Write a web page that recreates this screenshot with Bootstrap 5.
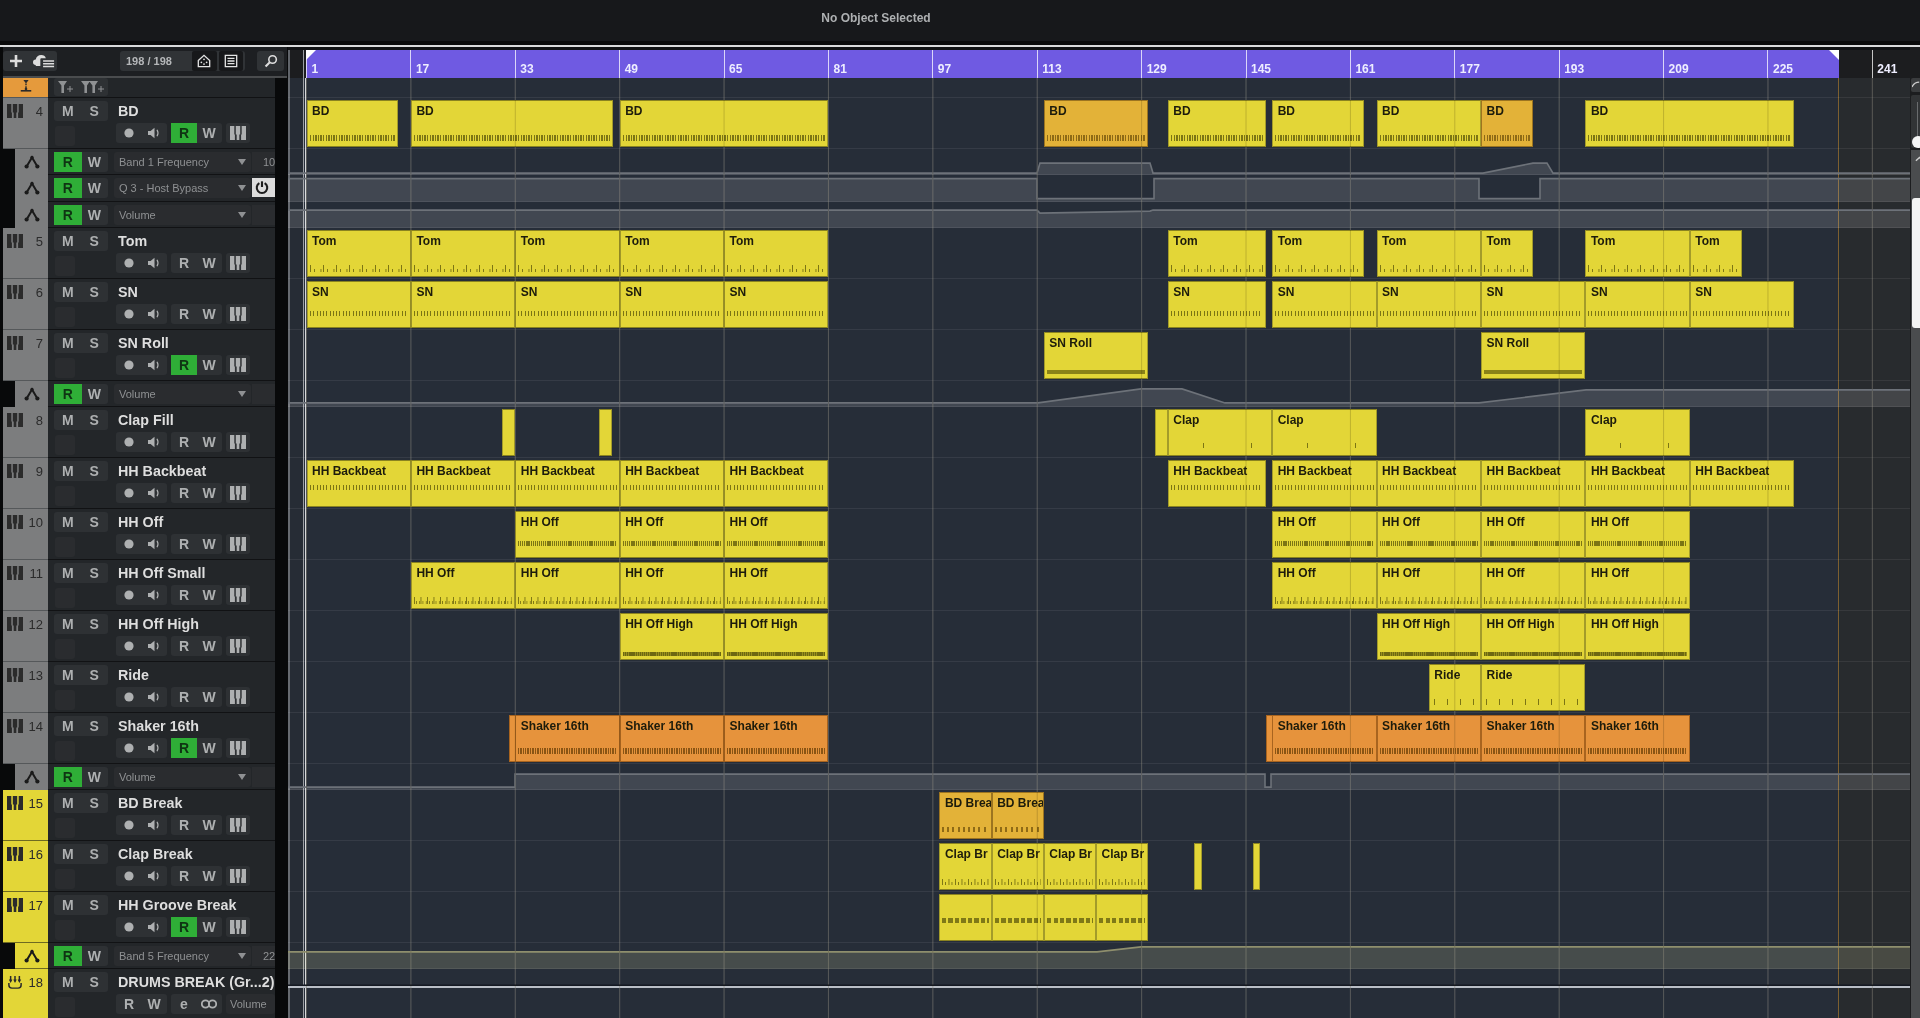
<!DOCTYPE html>
<html lang="en">
<head>
<meta charset="utf-8">
<title>Arrangement</title>
<link href="https://cdn.jsdelivr.net/npm/bootstrap@5.3.0/dist/css/bootstrap.min.css" rel="stylesheet">
<style>
html,body{height:100%;overflow:hidden;background:#111214}
body{font-family:"Liberation Sans",Arial,sans-serif;font-size:12px}
.appw{width:1920px;height:1018px;filter:blur(.45px)}
.topb{height:41px;background:#17181b;color:#aeb0b2;font-weight:700;font-size:12px;line-height:36px}
.topt{width:1752px}
.sepb{height:6px;background:#0a0a0b;border-bottom:2px solid #d9dadb;}
.lcol{width:288px;background:#08090a;padding-left:3px}
.tool{height:31px;width:284px;background:#1d1f22;padding:4px 0 0 0;border-bottom:2px solid #4a4c4e;gap:0}
.tg{height:20px;background:#303336;border-radius:3px;color:#ddd;display:flex;align-items:center}
.tg1{width:54px;justify-content:space-between;padding:0 2px 0 6px}
.tg2{width:125px;margin-left:63px;padding-left:6px;color:#b5b7b9;font-weight:700;font-size:11px}
.tcnt{width:70px}
.ti{width:26px;height:20px;background:#17181a;margin-right:2px;border-radius:2px;display:flex;align-items:center;justify-content:center;color:#e4e4e4}
.tg3{width:27px;margin-left:12px;justify-content:center}
.trows{width:272px}
.trk{height:50.9px;background:#232629;box-shadow:inset 0 -1px #111214}
.atr{height:26.5px;background:#232629;box-shadow:inset 0 -1px #111214}
.ttop{height:20px;background:#232629;box-shadow:inset 0 -1px #111214}
.tb{width:45px;flex:none;padding:6px 5px 0 4px;display:flex;justify-content:space-between;align-items:flex-start;color:#2b2b2b;font-size:13px;line-height:13px;font-weight:400;box-shadow:inset 0 -1px #55585a}
.tb span{margin-top:1px}
.tb-g{background:#7c7d7e}
.tb-y{background:#e3d637;box-shadow:inset 0 -1px #6e6a22}
.tb-o{background:#e59a3c;height:20px;justify-content:center;padding:1px 0 0}
.ab{width:12px;flex:none;background:#08090a}
.tb2{width:33px;flex:none;display:flex;justify-content:center;padding-top:6px;color:#1a1a1a}
.ca{width:54px;margin-left:6px;flex:none}
.cz{margin-left:8px;flex:1;min-width:0}
.gp{height:20px;width:54px;margin-top:3px;background:#2e3134;border-radius:3px;display:flex}
.gp2{width:51px;margin-top:0}
.gp3{width:24px;margin-top:0}
.gp .btn{flex:1;padding:0;border:0;border-radius:3px;font-size:14px;line-height:20px;font-weight:700;color:#aeb0b1;background:transparent;display:flex;align-items:center;justify-content:center}
.gp .on{background:#2fae37;color:#0f3413;border-radius:0}
.sq{width:20px;height:20px;margin:5px 0 0 1px;background:#2a2c2f;border-radius:3px}
.tname{height:25px;padding:4px 0 0 2px;font-size:14.3px;line-height:18px;font-weight:700;color:#dedede;white-space:nowrap}
.sel{width:137px;height:20px;margin:3px 0 0 6px;background:#2a2c2f;border-radius:3px;color:#8f9193;font-size:11px;line-height:20px;padding:0 5px;display:flex;justify-content:space-between;align-items:center;flex:none;font-weight:400;white-space:nowrap}
.val{width:23px;height:20px;margin:3px 0 0 1px;background:#2a2c2f;color:#8f9193;font-size:11px;line-height:20px;padding-left:11px;overflow:hidden;flex:none}
.pw{background:#dcdcdc;padding:2px 0 0 3px;height:19px;color:#1d1d1d}
.vbox{width:49px;height:20px;background:#2a2c2f;border-radius:3px;color:#8f9193;font-size:11px;line-height:20px;padding-left:4px;overflow:hidden}
.arr{width:1622px}
.rul{height:28px;margin-top:3px;background:#1c1d1f;margin-right:3px}
.rgut{width:18px;flex:none;background:linear-gradient(90deg,#60646a 0 2px,#1c1d1f 2px 15px,#9a9da2 15px 16px,#1c1d1f 16px)}
.rmain{background:linear-gradient(90deg,#6f5ae2 0 1533px,#1c1d1f 1533px);position:relative}
.rcell{width:104.4px;flex:none;border-left:1.5px solid rgba(255,255,255,.75);padding:12px 0 0 4.5px;color:#eef;font-weight:700;font-size:12px;line-height:14px}
.lk{position:absolute;top:0;width:10px;height:10px;background:#fff}
.lk1{left:0;clip-path:polygon(0 0,100% 0,0 100%)}
.lk2{left:1523px;clip-path:polygon(0 0,100% 0,100% 100%)}
.lanes{position:relative;height:940px;overflow:hidden;background:
 linear-gradient(90deg,rgba(255,255,255,.27) 1px,transparent 1px) 18px 0/104.4px 100% repeat-x,
 linear-gradient(90deg,#666a70 0 2px,#262c35 2px 15px,#9a9da2 15px 16px,#262d38 16px 17px,#d5d7da 17px 18px,#262d38 18px 1550px,#7e5f30 1550px 1551px,#1f2c33 1551px 1552px,#282b2e 1552px)}
.lanes::after{content:"";position:absolute;inset:0;pointer-events:none;background:linear-gradient(90deg,rgba(40,30,0,.2) 1px,transparent 1px) 18px 0/104.4px 100% repeat-x}
.lane{position:relative;box-shadow:inset 0 -1px rgba(255,255,255,.07)}
.lr{height:50.9px}.la{height:26.5px}.lt{height:20px}
.la svg{position:absolute;inset:0;width:100%;height:100%;display:block}
.lf{fill:rgba(255,255,255,.125)}
.ll{fill:none;stroke:#6d7279;stroke-width:1.6}
.lfy{fill:rgba(255,255,190,.15)}
.lly{fill:none;stroke:#8f8f6d;stroke-width:1.6}
.gline{height:2px;margin-top:17px;background:#b9bec6;box-shadow:0 -1.5px #141922}
.cp{--t:#7c7514;position:absolute;top:2px;bottom:2px;left:calc(var(--b)*6.525px + 18.5px);width:calc(var(--w)*6.525px);background:#e3d637;border:1px solid #8a8320;border-left-color:#a39b2a;border-right-color:#a39b2a;color:#1d1c0c;font-weight:700;font-size:12px;line-height:14px;padding:3px 0 0 4.5px;overflow:hidden;white-space:nowrap}
.or{background:#e3b238;border-color:#9c7420;--t:#8e6a16}
.sh{background:#e6933c;border-color:#a8641f;--t:#8a5514}
.cp::after{content:"";position:absolute;left:2px;right:2px;bottom:5px;height:6px}
.nt::after{display:none}
.l-bd .cp::after{background:repeating-linear-gradient(90deg,var(--t) 0 1.4px,transparent 1.4px 2.6px)}
.l-tom .cp::after{bottom:4px;height:7px;background:linear-gradient(90deg,var(--t) 1px,transparent 1px) 0 100%/13px 7px repeat-x,linear-gradient(90deg,var(--t) 1px,transparent 1px) 4px 100%/6.5px 3px repeat-x}
.l-sn .cp::after{bottom:11px;height:5px;background:repeating-linear-gradient(90deg,var(--t) 0 1px,transparent 1px 3.27px)}
.l-roll .cp::after{bottom:4px;height:4px;background:#8a8218}
.l-bb .cp::after{bottom:16px;height:5px;background:repeating-linear-gradient(90deg,var(--t) 0 1px,transparent 1px 3.27px)}
.l-off .cp::after{bottom:11px;height:5px;background:repeating-linear-gradient(90deg,var(--t) 0 1.2px,transparent 1.2px 2.1px)}
.l-sm .cp::after{bottom:4px;height:7px;background:linear-gradient(90deg,var(--t) 1px,transparent 1px) 0 100%/6.5px 7px repeat-x,linear-gradient(90deg,var(--t) 1px,transparent 1px) 2px 100%/3.27px 3px repeat-x}
.l-hi .cp::after{bottom:3px;height:4px;background:repeating-linear-gradient(90deg,#6d6712 0 1.3px,#98901c 1.3px 2.1px)}
.l-rd .cp::after{bottom:5px;height:6px;background:linear-gradient(90deg,var(--t) 1px,transparent 1px) 2px 100%/13px 6px repeat-x}
.l-sh .cp::after{bottom:7px;height:6px;background:repeating-linear-gradient(90deg,var(--t) 0 1px,transparent 1px 1.7px)}
.l-cl .cp::after{bottom:7px;height:5px;background:linear-gradient(90deg,var(--t) 1.5px,transparent 1.5px) 32px 100%/48px 5px repeat-x}
.l-bk .cp::after{bottom:6px;height:5px;background:repeating-linear-gradient(90deg,var(--t) 0 2px,transparent 2px 5.2px)}
.l-cb .cp::after{bottom:4px;height:6px;background:linear-gradient(90deg,var(--t) 1px,transparent 1px) 0 100%/6.5px 6px repeat-x,linear-gradient(90deg,var(--t) 1px,transparent 1px) 3px 100%/6.5px 3px repeat-x}
.l-gr .cp::after{bottom:17px;height:5px;background:repeating-linear-gradient(90deg,#7f7917 0 4.4px,transparent 4.4px 6.5px)}
.rstrip{width:10px;background:#1c1d1f;padding-top:4px}
.rb{height:24px;background:#3a3c3e;border-radius:2px 0 0 2px;margin-left:1px;margin-bottom:3px;color:#cfcfcf;display:flex;align-items:center;padding-left:1px}
.rb2{height:14px}
.rb3{height:53px;position:relative;background:#323436}
.rb3::after{content:"";position:absolute;left:6px;top:7px;width:1px;height:36px;background:#6a6c6e}
.knob{position:absolute;left:1px;top:41px;width:12px;height:12px;border-radius:50%;background:#f5f5f5;z-index:1}
.rp{height:868px;background:#4a4c4e;margin-left:1px;margin-top:-1px;padding-top:6px;color:#cfcfcf}
.thumb{height:130px;margin-top:36px;margin-left:1px;background:#f4f4f4;border-radius:3px 0 0 3px}
.ik{width:16px;height:14px;display:block}
.i14{width:14px;height:14px;display:block}
.i12{width:12px;height:12px;display:block}
.i8{width:8px;height:6px;display:block}
</style>
</head>
<body>
<svg width="0" height="0" class="position-absolute">
<symbol id="k" viewBox="0 0 16 14"><path fill="currentColor" d="M0 0h4.3v8.5h.6V14H0zM5.8 0h4.4v8.5H9.3V14H6.7V8.5h-.9zM11.7 0H16v14h-4.9V8.5h.6z"/></symbol>
<symbol id="a" viewBox="0 0 16 14"><path d="M2.6 11.5 8 2.5l5.4 9" fill="none" stroke="currentColor" stroke-width="2"/><circle cx="2.6" cy="11.5" r="2.1" fill="currentColor"/><circle cx="13.4" cy="11.5" r="2.1" fill="currentColor"/><circle cx="8" cy="2.5" r="1.7" fill="currentColor"/></symbol>
<symbol id="d" viewBox="0 0 14 14"><circle cx="7" cy="7" r="4.6" fill="currentColor"/></symbol>
<symbol id="s" viewBox="0 0 14 14"><path fill="currentColor" d="M1 5h2.6L7.5 1.8v10.4L3.6 9H1z"/><path d="M10 3.8q2 3.2 0 6.4" fill="none" stroke="currentColor" stroke-width="1.2"/></symbol>
<symbol id="g" viewBox="0 0 16 16"><path d="M3 1v6M8 1v6M13 1v6M1 9v2.5Q1 15 4.5 15h7q3.5 0 3.5-3.5V9" fill="none" stroke="currentColor" stroke-width="1.7"/><path fill="currentColor" d="M1 5h4L3 9zM6 5h4L8 9zM11 5h4l-2 4z"/></symbol>
<symbol id="h" viewBox="0 0 16 16"><path d="M1.5 7.5 8 1.5l6.5 6V14.5h-13z" fill="none" stroke="currentColor" stroke-width="1.5"/><circle cx="8" cy="6" r="1" fill="currentColor"/><circle cx="5" cy="9.5" r="1" fill="currentColor"/><circle cx="11" cy="9.5" r="1" fill="currentColor"/><circle cx="8" cy="11.5" r="1" fill="currentColor"/></symbol>
<symbol id="l" viewBox="0 0 16 16"><path d="M1.5 1.5h13v13h-13zM4 5h8M4 8h8M4 11h8" fill="none" stroke="currentColor" stroke-width="1.5"/></symbol>
<symbol id="m" viewBox="0 0 16 16"><circle cx="9.8" cy="6.2" r="4.3" fill="none" stroke="currentColor" stroke-width="1.8"/><path d="M6.6 9.4 1.8 14.2" stroke="currentColor" stroke-width="2.4"/></symbol>
<symbol id="c" viewBox="0 0 24 16"><path fill="currentColor" d="M3 13Q0 13 0 10t3-3q1-5 6-5 4 0 5 3.5H9q-1 0-1 1V14H3z"/><path d="M11 8.5h12M11 11.5h12M11 14.5h12" stroke="currentColor" stroke-width="1.6"/></symbol>
<symbol id="p" viewBox="0 0 16 16"><path d="M5 3.6a6 6 0 1 0 6 0" fill="none" stroke="currentColor" stroke-width="2.4"/><path d="M8 1.5v6.5" stroke="currentColor" stroke-width="2.4"/></symbol>
<symbol id="f" viewBox="0 0 16 14"><path fill="currentColor" d="M0 1h9L6 5.5V13H3.4V5.5z"/><path d="M9 9h6M12 6v6" stroke="currentColor" stroke-width="1"/></symbol>
<symbol id="f2" viewBox="0 0 24 14"><path fill="currentColor" d="M0 1h9L6 5.5V13H3.4V5.5zM8 1h9l-3 4.5V13h-2.6V5.5z"/><path d="M17 9h6M20 6v6" stroke="currentColor" stroke-width="1"/></symbol>
<symbol id="o" viewBox="0 0 16 16"><path fill="currentColor" d="M5 1h6L8 5z"/><path d="M8 5v6" stroke="currentColor" stroke-width="1.6" stroke-dasharray="2 1.4"/><path d="M2 13.5h12" stroke="currentColor" stroke-width="1.8"/><circle cx="8" cy="11.5" r="1.5" fill="currentColor"/></symbol>
<symbol id="r" viewBox="0 0 16 14"><circle cx="4.5" cy="7" r="3.7" fill="none" stroke="currentColor" stroke-width="1.8"/><circle cx="11.5" cy="7" r="3.7" fill="none" stroke="currentColor" stroke-width="1.8"/></symbol>
<symbol id="t" viewBox="0 0 8 6"><path fill="currentColor" d="M0 0h8L4 6z"/></symbol>
<symbol id="cu" viewBox="0 0 10 10"><path d="M0 8Q3 2 9 2" fill="none" stroke="currentColor" stroke-width="1.6"/></symbol>
<symbol id="ch" viewBox="0 0 10 6"><path d="M1 5l4-3.6L9 5" fill="none" stroke="currentColor" stroke-width="1.6"/></symbol>
</svg>
<div class="appw d-flex flex-column">
<div class="topb"><div class="topt text-center">No Object Selected</div></div>
<div class="sepb"></div>
<div class="d-flex flex-grow-1 overflow-hidden">
<div class="lcol flex-none">
<div class="tool d-flex">
<div class="tg tg1"><svg class="i14"><path d="M7 1v12M1 7h12" stroke="currentColor" stroke-width="2.6"/></svg><svg width="22" height="15"><use href="#c"/></svg></div>
<div class="tg tg2"><span class="tcnt">198 / 198</span><span class="ti"><svg class="i14"><use href="#h"/></svg></span><span class="ti"><svg class="i14"><use href="#l"/></svg></span></div>
<div class="tg tg3"><svg class="i14"><use href="#m"/></svg></div>
</div>
<div class="trows">
<div class="ttop d-flex"><div class="tb tb-o"><svg class="i14"><use href="#o"/></svg></div><div class="ca"><div class="gp m-0 d-flex align-items-center justify-content-around" style="height:18px;color:#8f9193"><svg width="16" height="14"><use href="#f"/></svg><svg width="24" height="14"><use href="#f2"/></svg></div></div></div>

<div class="trk d-flex"><div class="tb tb-g"><svg class="ik"><use href="#k"/></svg><span>4</span></div><div class="ca"><div class="btn-group gp"><button class="btn">M</button><button class="btn">S</button></div><div class="sq"></div></div><div class="cz"><div class="tname">BD</div><div class="d-flex gap-1"><div class="btn-group gp gp2"><button class="btn"><svg class="i14"><use href="#d"/></svg></button><button class="btn"><svg class="i14"><use href="#s"/></svg></button></div><div class="btn-group gp gp2"><button class="btn on">R</button><button class="btn">W</button></div><div class="gp gp3"><button class="btn"><svg class="ik"><use href="#k"/></svg></button></div></div></div></div>

<div class="atr d-flex"><div class="ab"></div><div class="tb2 tb-g"><svg class="ik"><use href="#a"/></svg></div><div class="ca"><div class="btn-group gp"><button class="btn on">R</button><button class="btn">W</button></div></div><div class="sel">Band 1 Frequency<svg class="i8"><use href="#t"/></svg></div><div class="val">10</div></div>
<div class="atr d-flex"><div class="ab"></div><div class="tb2 tb-g"><svg class="ik"><use href="#a"/></svg></div><div class="ca"><div class="btn-group gp"><button class="btn on">R</button><button class="btn">W</button></div></div><div class="sel">Q 3 - Host Bypass<svg class="i8"><use href="#t"/></svg></div><div class="val pw"><svg class="i14"><use href="#p"/></svg></div></div>
<div class="atr d-flex"><div class="ab"></div><div class="tb2 tb-g"><svg class="ik"><use href="#a"/></svg></div><div class="ca"><div class="btn-group gp"><button class="btn on">R</button><button class="btn">W</button></div></div><div class="sel">Volume<svg class="i8"><use href="#t"/></svg></div><div class="val"></div></div>

<div class="trk d-flex"><div class="tb tb-g"><svg class="ik"><use href="#k"/></svg><span>5</span></div><div class="ca"><div class="btn-group gp"><button class="btn">M</button><button class="btn">S</button></div><div class="sq"></div></div><div class="cz"><div class="tname">Tom</div><div class="d-flex gap-1"><div class="btn-group gp gp2"><button class="btn"><svg class="i14"><use href="#d"/></svg></button><button class="btn"><svg class="i14"><use href="#s"/></svg></button></div><div class="btn-group gp gp2"><button class="btn">R</button><button class="btn">W</button></div><div class="gp gp3"><button class="btn"><svg class="ik"><use href="#k"/></svg></button></div></div></div></div>

<div class="trk d-flex"><div class="tb tb-g"><svg class="ik"><use href="#k"/></svg><span>6</span></div><div class="ca"><div class="btn-group gp"><button class="btn">M</button><button class="btn">S</button></div><div class="sq"></div></div><div class="cz"><div class="tname">SN</div><div class="d-flex gap-1"><div class="btn-group gp gp2"><button class="btn"><svg class="i14"><use href="#d"/></svg></button><button class="btn"><svg class="i14"><use href="#s"/></svg></button></div><div class="btn-group gp gp2"><button class="btn">R</button><button class="btn">W</button></div><div class="gp gp3"><button class="btn"><svg class="ik"><use href="#k"/></svg></button></div></div></div></div>

<div class="trk d-flex"><div class="tb tb-g"><svg class="ik"><use href="#k"/></svg><span>7</span></div><div class="ca"><div class="btn-group gp"><button class="btn">M</button><button class="btn">S</button></div><div class="sq"></div></div><div class="cz"><div class="tname">SN Roll</div><div class="d-flex gap-1"><div class="btn-group gp gp2"><button class="btn"><svg class="i14"><use href="#d"/></svg></button><button class="btn"><svg class="i14"><use href="#s"/></svg></button></div><div class="btn-group gp gp2"><button class="btn on">R</button><button class="btn">W</button></div><div class="gp gp3"><button class="btn"><svg class="ik"><use href="#k"/></svg></button></div></div></div></div>

<div class="atr d-flex"><div class="ab"></div><div class="tb2 tb-g"><svg class="ik"><use href="#a"/></svg></div><div class="ca"><div class="btn-group gp"><button class="btn on">R</button><button class="btn">W</button></div></div><div class="sel">Volume<svg class="i8"><use href="#t"/></svg></div><div class="val"></div></div>

<div class="trk d-flex"><div class="tb tb-g"><svg class="ik"><use href="#k"/></svg><span>8</span></div><div class="ca"><div class="btn-group gp"><button class="btn">M</button><button class="btn">S</button></div><div class="sq"></div></div><div class="cz"><div class="tname">Clap Fill</div><div class="d-flex gap-1"><div class="btn-group gp gp2"><button class="btn"><svg class="i14"><use href="#d"/></svg></button><button class="btn"><svg class="i14"><use href="#s"/></svg></button></div><div class="btn-group gp gp2"><button class="btn">R</button><button class="btn">W</button></div><div class="gp gp3"><button class="btn"><svg class="ik"><use href="#k"/></svg></button></div></div></div></div>

<div class="trk d-flex"><div class="tb tb-g"><svg class="ik"><use href="#k"/></svg><span>9</span></div><div class="ca"><div class="btn-group gp"><button class="btn">M</button><button class="btn">S</button></div><div class="sq"></div></div><div class="cz"><div class="tname">HH Backbeat</div><div class="d-flex gap-1"><div class="btn-group gp gp2"><button class="btn"><svg class="i14"><use href="#d"/></svg></button><button class="btn"><svg class="i14"><use href="#s"/></svg></button></div><div class="btn-group gp gp2"><button class="btn">R</button><button class="btn">W</button></div><div class="gp gp3"><button class="btn"><svg class="ik"><use href="#k"/></svg></button></div></div></div></div>

<div class="trk d-flex"><div class="tb tb-g"><svg class="ik"><use href="#k"/></svg><span>10</span></div><div class="ca"><div class="btn-group gp"><button class="btn">M</button><button class="btn">S</button></div><div class="sq"></div></div><div class="cz"><div class="tname">HH Off</div><div class="d-flex gap-1"><div class="btn-group gp gp2"><button class="btn"><svg class="i14"><use href="#d"/></svg></button><button class="btn"><svg class="i14"><use href="#s"/></svg></button></div><div class="btn-group gp gp2"><button class="btn">R</button><button class="btn">W</button></div><div class="gp gp3"><button class="btn"><svg class="ik"><use href="#k"/></svg></button></div></div></div></div>

<div class="trk d-flex"><div class="tb tb-g"><svg class="ik"><use href="#k"/></svg><span>11</span></div><div class="ca"><div class="btn-group gp"><button class="btn">M</button><button class="btn">S</button></div><div class="sq"></div></div><div class="cz"><div class="tname">HH Off Small</div><div class="d-flex gap-1"><div class="btn-group gp gp2"><button class="btn"><svg class="i14"><use href="#d"/></svg></button><button class="btn"><svg class="i14"><use href="#s"/></svg></button></div><div class="btn-group gp gp2"><button class="btn">R</button><button class="btn">W</button></div><div class="gp gp3"><button class="btn"><svg class="ik"><use href="#k"/></svg></button></div></div></div></div>

<div class="trk d-flex"><div class="tb tb-g"><svg class="ik"><use href="#k"/></svg><span>12</span></div><div class="ca"><div class="btn-group gp"><button class="btn">M</button><button class="btn">S</button></div><div class="sq"></div></div><div class="cz"><div class="tname">HH Off High</div><div class="d-flex gap-1"><div class="btn-group gp gp2"><button class="btn"><svg class="i14"><use href="#d"/></svg></button><button class="btn"><svg class="i14"><use href="#s"/></svg></button></div><div class="btn-group gp gp2"><button class="btn">R</button><button class="btn">W</button></div><div class="gp gp3"><button class="btn"><svg class="ik"><use href="#k"/></svg></button></div></div></div></div>

<div class="trk d-flex"><div class="tb tb-g"><svg class="ik"><use href="#k"/></svg><span>13</span></div><div class="ca"><div class="btn-group gp"><button class="btn">M</button><button class="btn">S</button></div><div class="sq"></div></div><div class="cz"><div class="tname">Ride</div><div class="d-flex gap-1"><div class="btn-group gp gp2"><button class="btn"><svg class="i14"><use href="#d"/></svg></button><button class="btn"><svg class="i14"><use href="#s"/></svg></button></div><div class="btn-group gp gp2"><button class="btn">R</button><button class="btn">W</button></div><div class="gp gp3"><button class="btn"><svg class="ik"><use href="#k"/></svg></button></div></div></div></div>

<div class="trk d-flex"><div class="tb tb-g"><svg class="ik"><use href="#k"/></svg><span>14</span></div><div class="ca"><div class="btn-group gp"><button class="btn">M</button><button class="btn">S</button></div><div class="sq"></div></div><div class="cz"><div class="tname">Shaker 16th</div><div class="d-flex gap-1"><div class="btn-group gp gp2"><button class="btn"><svg class="i14"><use href="#d"/></svg></button><button class="btn"><svg class="i14"><use href="#s"/></svg></button></div><div class="btn-group gp gp2"><button class="btn on">R</button><button class="btn">W</button></div><div class="gp gp3"><button class="btn"><svg class="ik"><use href="#k"/></svg></button></div></div></div></div>

<div class="atr d-flex"><div class="ab"></div><div class="tb2 tb-g"><svg class="ik"><use href="#a"/></svg></div><div class="ca"><div class="btn-group gp"><button class="btn on">R</button><button class="btn">W</button></div></div><div class="sel">Volume<svg class="i8"><use href="#t"/></svg></div><div class="val"></div></div>

<div class="trk d-flex"><div class="tb tb-y"><svg class="ik"><use href="#k"/></svg><span>15</span></div><div class="ca"><div class="btn-group gp"><button class="btn">M</button><button class="btn">S</button></div><div class="sq"></div></div><div class="cz"><div class="tname">BD Break</div><div class="d-flex gap-1"><div class="btn-group gp gp2"><button class="btn"><svg class="i14"><use href="#d"/></svg></button><button class="btn"><svg class="i14"><use href="#s"/></svg></button></div><div class="btn-group gp gp2"><button class="btn">R</button><button class="btn">W</button></div><div class="gp gp3"><button class="btn"><svg class="ik"><use href="#k"/></svg></button></div></div></div></div>

<div class="trk d-flex"><div class="tb tb-y"><svg class="ik"><use href="#k"/></svg><span>16</span></div><div class="ca"><div class="btn-group gp"><button class="btn">M</button><button class="btn">S</button></div><div class="sq"></div></div><div class="cz"><div class="tname">Clap Break</div><div class="d-flex gap-1"><div class="btn-group gp gp2"><button class="btn"><svg class="i14"><use href="#d"/></svg></button><button class="btn"><svg class="i14"><use href="#s"/></svg></button></div><div class="btn-group gp gp2"><button class="btn">R</button><button class="btn">W</button></div><div class="gp gp3"><button class="btn"><svg class="ik"><use href="#k"/></svg></button></div></div></div></div>

<div class="trk d-flex"><div class="tb tb-y"><svg class="ik"><use href="#k"/></svg><span>17</span></div><div class="ca"><div class="btn-group gp"><button class="btn">M</button><button class="btn">S</button></div><div class="sq"></div></div><div class="cz"><div class="tname">HH Groove Break</div><div class="d-flex gap-1"><div class="btn-group gp gp2"><button class="btn"><svg class="i14"><use href="#d"/></svg></button><button class="btn"><svg class="i14"><use href="#s"/></svg></button></div><div class="btn-group gp gp2"><button class="btn on">R</button><button class="btn">W</button></div><div class="gp gp3"><button class="btn"><svg class="ik"><use href="#k"/></svg></button></div></div></div></div>

<div class="atr d-flex"><div class="ab"></div><div class="tb2 tb-y"><svg class="ik"><use href="#a"/></svg></div><div class="ca"><div class="btn-group gp"><button class="btn on">R</button><button class="btn">W</button></div></div><div class="sel">Band 5 Frequency<svg class="i8"><use href="#t"/></svg></div><div class="val">22</div></div>

<div class="trk d-flex"><div class="tb tb-y"><svg class="ik"><use href="#g"/></svg><span>18</span></div><div class="ca"><div class="btn-group gp"><button class="btn">M</button><button class="btn">S</button></div><div class="sq"></div></div><div class="cz"><div class="tname">DRUMS BREAK (Gr...2)</div><div class="d-flex gap-1"><div class="btn-group gp gp2"><button class="btn">R</button><button class="btn">W</button></div><div class="btn-group gp gp2"><button class="btn">e</button><button class="btn"><svg class="ik"><use href="#r"/></svg></button></div><div class="vbox">Volume</div></div></div></div>
</div>
</div>

<div class="arr d-flex flex-column">
<div class="rul d-flex"><div class="rgut"></div><div class="rmain d-flex flex-grow-1"><div class="rcell">1</div><div class="rcell">17</div><div class="rcell">33</div><div class="rcell">49</div><div class="rcell">65</div><div class="rcell">81</div><div class="rcell">97</div><div class="rcell">113</div><div class="rcell">129</div><div class="rcell">145</div><div class="rcell">161</div><div class="rcell">177</div><div class="rcell">193</div><div class="rcell">209</div><div class="rcell">225</div><div class="rcell">241</div><span class="lk lk1"></span><span class="lk lk2"></span></div></div>
<div class="lanes">
<div class="lane lt"></div>
<div class="lane lr l-bd"><div class="cp" style="--b:0;--w:14">BD</div><div class="cp" style="--b:16;--w:31">BD</div><div class="cp" style="--b:48;--w:32">BD</div><div class="cp or" style="--b:113;--w:16">BD</div><div class="cp" style="--b:132;--w:15">BD</div><div class="cp" style="--b:148;--w:14">BD</div><div class="cp" style="--b:164;--w:16">BD</div><div class="cp or" style="--b:180;--w:8">BD</div><div class="cp" style="--b:196;--w:32">BD</div></div>
<div class="lane la"><svg viewBox="288 148.9 1622 26.5" preserveAspectRatio="none"><path class="lf" d="M288 173H1037L1040 163H1150L1153 173H1483L1533 163H1547L1553 173H1910V176H288Z"/><path class="ll" d="M288 173H1037L1040 163H1150L1153 173H1483L1533 163H1547L1553 173H1910"/></svg></div>
<div class="lane la"><svg viewBox="288 175.4 1622 26.5" preserveAspectRatio="none"><path class="lf" d="M288 179H1037V199H1154V179H1479V199H1540V179H1910V203H288Z"/><path class="ll" d="M288 179H1037V199H1154V179H1479V199H1540V179H1910"/></svg></div>
<div class="lane la"><svg viewBox="288 201.9 1622 26.5" preserveAspectRatio="none"><path class="lf" d="M288 210H1037L1040 213L1150 211L1153 210H1910V229H288Z"/><path class="ll" d="M288 210H1037L1040 213L1150 211L1153 210H1910"/></svg></div>
<div class="lane lr l-tom"><div class="cp" style="--b:0;--w:16">Tom</div><div class="cp" style="--b:16;--w:16">Tom</div><div class="cp" style="--b:32;--w:16">Tom</div><div class="cp" style="--b:48;--w:16">Tom</div><div class="cp" style="--b:64;--w:16">Tom</div><div class="cp" style="--b:132;--w:15">Tom</div><div class="cp" style="--b:148;--w:14">Tom</div><div class="cp" style="--b:164;--w:16">Tom</div><div class="cp" style="--b:180;--w:8">Tom</div><div class="cp" style="--b:196;--w:16">Tom</div><div class="cp" style="--b:212;--w:8">Tom</div></div>
<div class="lane lr l-sn"><div class="cp" style="--b:0;--w:16">SN</div><div class="cp" style="--b:16;--w:16">SN</div><div class="cp" style="--b:32;--w:16">SN</div><div class="cp" style="--b:48;--w:16">SN</div><div class="cp" style="--b:64;--w:16">SN</div><div class="cp" style="--b:132;--w:15">SN</div><div class="cp" style="--b:148;--w:16">SN</div><div class="cp" style="--b:164;--w:16">SN</div><div class="cp" style="--b:180;--w:16">SN</div><div class="cp" style="--b:196;--w:16">SN</div><div class="cp" style="--b:212;--w:16">SN</div></div>
<div class="lane lr l-roll"><div class="cp" style="--b:113;--w:16">SN Roll</div><div class="cp" style="--b:180;--w:16">SN Roll</div></div>
<div class="lane la"><svg viewBox="288 381.1 1622 26.5" preserveAspectRatio="none"><path class="lf" d="M288 403H1038L1141 389H1182L1225 403H1479L1586 390H1910V408H288Z"/><path class="ll" d="M288 403H1038L1141 389H1182L1225 403H1479L1586 390H1910"/></svg></div>
<div class="lane lr l-cl"><div class="cp nt" style="--b:30;--w:1.9"></div><div class="cp nt" style="--b:44.8;--w:2"></div><div class="cp nt" style="--b:130;--w:2"></div><div class="cp" style="--b:132;--w:16">Clap</div><div class="cp" style="--b:148;--w:16">Clap</div><div class="cp" style="--b:196;--w:16">Clap</div></div>
<div class="lane lr l-bb"><div class="cp" style="--b:0;--w:16">HH Backbeat</div><div class="cp" style="--b:16;--w:16">HH Backbeat</div><div class="cp" style="--b:32;--w:16">HH Backbeat</div><div class="cp" style="--b:48;--w:16">HH Backbeat</div><div class="cp" style="--b:64;--w:16">HH Backbeat</div><div class="cp" style="--b:132;--w:15">HH Backbeat</div><div class="cp" style="--b:148;--w:16">HH Backbeat</div><div class="cp" style="--b:164;--w:16">HH Backbeat</div><div class="cp" style="--b:180;--w:16">HH Backbeat</div><div class="cp" style="--b:196;--w:16">HH Backbeat</div><div class="cp" style="--b:212;--w:16">HH Backbeat</div></div>
<div class="lane lr l-off"><div class="cp" style="--b:32;--w:16">HH Off</div><div class="cp" style="--b:48;--w:16">HH Off</div><div class="cp" style="--b:64;--w:16">HH Off</div><div class="cp" style="--b:148;--w:16">HH Off</div><div class="cp" style="--b:164;--w:16">HH Off</div><div class="cp" style="--b:180;--w:16">HH Off</div><div class="cp" style="--b:196;--w:16">HH Off</div></div>
<div class="lane lr l-sm"><div class="cp" style="--b:16;--w:16">HH Off</div><div class="cp" style="--b:32;--w:16">HH Off</div><div class="cp" style="--b:48;--w:16">HH Off</div><div class="cp" style="--b:64;--w:16">HH Off</div><div class="cp" style="--b:148;--w:16">HH Off</div><div class="cp" style="--b:164;--w:16">HH Off</div><div class="cp" style="--b:180;--w:16">HH Off</div><div class="cp" style="--b:196;--w:16">HH Off</div></div>
<div class="lane lr l-hi"><div class="cp" style="--b:48;--w:16">HH Off High</div><div class="cp" style="--b:64;--w:16">HH Off High</div><div class="cp" style="--b:164;--w:16">HH Off High</div><div class="cp" style="--b:180;--w:16">HH Off High</div><div class="cp" style="--b:196;--w:16">HH Off High</div></div>
<div class="lane lr l-rd"><div class="cp" style="--b:172;--w:8">Ride</div><div class="cp" style="--b:180;--w:16">Ride</div></div>
<div class="lane lr l-sh"><div class="cp sh nt" style="--b:31;--w:1.2"></div><div class="cp sh" style="--b:32;--w:16">Shaker 16th</div><div class="cp sh" style="--b:48;--w:16">Shaker 16th</div><div class="cp sh" style="--b:64;--w:16">Shaker 16th</div><div class="cp sh nt" style="--b:147;--w:1.2"></div><div class="cp sh" style="--b:148;--w:16">Shaker 16th</div><div class="cp sh" style="--b:164;--w:16">Shaker 16th</div><div class="cp sh" style="--b:180;--w:16">Shaker 16th</div><div class="cp sh" style="--b:196;--w:16">Shaker 16th</div></div>
<div class="lane la"><svg viewBox="288 763.9 1622 26.5" preserveAspectRatio="none"><path class="lf" d="M288 787H515V774H1265V787H1271V774H1910V791H288Z"/><path class="ll" d="M288 787H515V774H1265V787H1271V774H1910"/></svg></div>
<div class="lane lr l-bk"><div class="cp or" style="--b:97;--w:8">BD Brea</div><div class="cp or" style="--b:105;--w:8">BD Brea</div></div>
<div class="lane lr l-cb"><div class="cp" style="--b:97;--w:8">Clap Br</div><div class="cp" style="--b:105;--w:8">Clap Br</div><div class="cp" style="--b:113;--w:8">Clap Br</div><div class="cp" style="--b:121;--w:8">Clap Br</div><div class="cp nt" style="--b:136;--w:1.2"></div><div class="cp nt" style="--b:145;--w:1.2"></div></div>
<div class="lane lr l-gr"><div class="cp" style="--b:97;--w:8"></div><div class="cp" style="--b:105;--w:8"></div><div class="cp" style="--b:113;--w:8"></div><div class="cp" style="--b:121;--w:8"></div></div>
<div class="lane la"><svg viewBox="288 943.1 1622 26.5" preserveAspectRatio="none"><path class="lfy" d="M288 952H1097L1141 947H1910V970H288Z"/><path class="lly" d="M288 952H1097L1141 947H1910"/></svg></div>
<div class="lane lr"><div class="gline"></div></div>
</div>
</div>

<div class="rstrip d-flex flex-column">
<div class="rb"><svg class="i8"><use href="#t"/></svg></div>
<div class="rb rb2"><svg width="9" height="9"><use href="#cu"/></svg></div>
<div class="rb rb3"><span class="knob"></span></div>
<div class="rp"><svg width="9" height="6" class="d-block ms-1"><use href="#ch"/></svg><div class="thumb"></div></div>
</div>
</div>
</div>
</body>
</html>
